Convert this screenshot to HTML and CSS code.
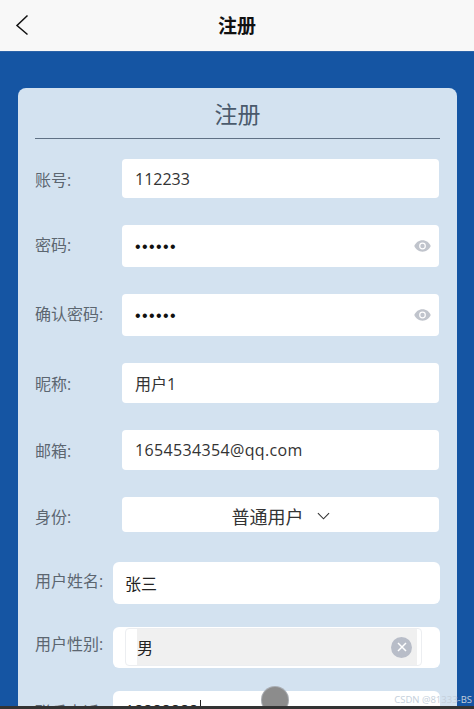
FILE: index.html
```html
<!DOCTYPE html>
<html lang="zh-CN">
<head>
  <meta charset="UTF-8" />
  <meta name="viewport" content="width=device-width, initial-scale=1.0"/>
  <title>注册</title>
  <link rel="stylesheet" href="styles.css">
</head>
<body>
  <header class="nav-bar">
    <svg class="back-icon" viewBox="0 0 14 22" width="14" height="22">
      <path d="M12.5 1.5 2 11.5 12.5 20.5" fill="none" stroke="#111" stroke-width="1.5"/>
    </svg>
    <span class="nav-title">注册</span>
  </header>

  <main class="page">
    <div class="card">
      <h1 class="card-title">注册</h1>

      <div class="row row-account">
        <span class="row-label">账号:</span>
        <div class="field">112233</div>
      </div>

      <div class="row row-password">
        <span class="row-label">密码:</span>
        <div class="field field-tall">
          <span class="dots">••••••</span>
          <svg class="eye-icon" viewBox="0 0 18 12" width="17" height="12">
            <path d="M9 0C5 0 1.800 2.500 0.300 6 1.800 9.500 5 12 9 12s7.200-2.500 8.700-6C16.200 2.500 13 0 9 0Z" fill="#c0c4cc"/>
            <circle cx="9" cy="6" r="3.600" fill="#fff"/>
            <circle cx="9" cy="6" r="2.300" fill="#c0c4cc"/>
          </svg>
        </div>
      </div>

      <div class="row row-confirm">
        <span class="row-label">确认密码:</span>
        <div class="field field-tall">
          <span class="dots">••••••</span>
          <svg class="eye-icon" viewBox="0 0 18 12" width="17" height="12">
            <path d="M9 0C5 0 1.800 2.500 0.300 6 1.800 9.500 5 12 9 12s7.200-2.500 8.700-6C16.200 2.500 13 0 9 0Z" fill="#c0c4cc"/>
            <circle cx="9" cy="6" r="3.600" fill="#fff"/>
            <circle cx="9" cy="6" r="2.300" fill="#c0c4cc"/>
          </svg>
        </div>
      </div>

      <div class="row row-nick">
        <span class="row-label">昵称:</span>
        <div class="field field-mid">用户1</div>
      </div>

      <div class="row row-mail">
        <span class="row-label">邮箱:</span>
        <div class="field field-mid field-mail">1654534354@qq.com</div>
      </div>

      <div class="row row-role">
        <span class="row-label">身份:</span>
        <div class="field field-select">
          <span>普通用户</span>
          <svg class="chevron" viewBox="0 0 14 8" width="13" height="8">
            <path d="M1 1 7 7 13 1" fill="none" stroke="#333" stroke-width="1.200"/>
          </svg>
        </div>
      </div>

      <div class="row row-name">
        <span class="row-label">用户姓名:</span>
        <div class="field field-wide">张三</div>
      </div>

      <div class="row row-gender">
        <span class="row-label">用户性别:</span>
        <div class="gender-box">
          <div class="gender-inner">
            <div class="gender-value">
              <span>男</span>
              <span class="clear-btn">
                <svg viewBox="0 0 10 10" width="10" height="10">
                  <path d="M1 1 9 9M9 1 1 9" stroke="#fff" stroke-width="1.500"/>
                </svg>
              </span>
            </div>
          </div>
        </div>
      </div>

      <div class="row row-phone">
        <span class="row-label">联系电话:</span>
        <div class="field field-wide"><span class="caret-text">18888888</span></div>
      </div>
    </div>
  </main>

  <div class="home-dot"></div>
  <div class="bottom-strip"></div>
  <div class="watermark">CSDN @81333-BS</div>
</body>
</html>
```

FILE: styles.css
```css
html, body {
  margin: 0;
  height: 709px;
  overflow: hidden;
}

body {
  position: relative;
  font-family: "Open Sans", "Noto Sans CJK SC", sans-serif;
  background-color: #1555a3;
  color: #333;
}

.nav-bar {
  height: 52px;
  background-color: #f8f8f8;
  border-bottom: 1px solid #2c63a8;
  box-sizing: border-box;
  display: flex;
  align-items: center;
  justify-content: center;
  position: relative;
}

.back-icon {
  position: absolute;
  left: 15px;
  top: 14px;
}

.nav-title {
  font-size: 19px;
  font-weight: 700;
  color: #111;
  margin-top: -1px;
}

.page {
  padding: 36px 17px 0 18px;
}

.card {
  background-color: #d3e2f0;
  border-radius: 8px;
  padding: 13px 17px 0;
  height: 640px;
}

.card-title {
  margin: 0;
  height: 37px;
  border-bottom: 1px solid #5f7185;
  font-size: 23px;
  font-weight: 400;
  line-height: 27px;
  text-align: center;
  color: #4a5a6c;
}

.row {
  display: flex;
  align-items: center;
}

.row-label {
  width: 87px;
  flex-shrink: 0;
  font-size: 16px;
  color: #5c6670;
}

.field {
  flex: 1;
  height: 39px;
  margin-right: 1px;
  background-color: #fff;
  border-radius: 4px;
  padding: 0 13px;
  box-sizing: border-box;
  display: flex;
  align-items: center;
  font-size: 16px;
  color: #333;
}

.field-tall {
  height: 42px;
  justify-content: space-between;
  padding-right: 8px;
}

.field-mid {
  height: 40px;
}

.field-mail {
  letter-spacing: 0.350px;
}

.dots {
  font-family: "Liberation Sans", sans-serif;
  font-size: 16px;
  letter-spacing: 1.400px;
  color: #111;
  padding-top: 2px;
}

.eye-icon {
  flex-shrink: 0;
}

.row-account { margin-top: 20px; }
.row-password { margin-top: 27px; }
.row-confirm { margin-top: 27px; }
.row-nick { margin-top: 27px; }
.row-mail { margin-top: 27px; }
.row-role { margin-top: 27px; }
.row-name { margin-top: 30px; }
.row-gender { margin-top: 23px; }
.row-phone { margin-top: 23px; }

.row-password .row-label,
.row-confirm .row-label {
  margin-top: -4px;
}

.row-role .row-label {
  margin-top: 3px;
}

.field-select {
  height: 35px;
  justify-content: center;
  gap: 13px;
  padding-top: 3px;
  font-size: 18px;
}

.row-name .row-label,
.row-gender .row-label,
.row-phone .row-label {
  width: 78px;
}

.row-name .row-label {
  margin-top: -6px;
}

.field-wide {
  height: 42px;
  margin-right: 0;
  border-radius: 6px;
  padding-left: 12px;
  color: #222;
}

.row-gender .row-label {
  margin-top: -10px;
}

.gender-box {
  flex: 1;
  height: 41px;
  padding: 1px 18px 2px 12px;
  box-sizing: border-box;
  background-color: #fff;
  border-radius: 6px;
  display: flex;
}

.gender-inner {
  flex: 1;
  border: 1px solid #eceef1;
  border-radius: 4px;
  padding: 0 4px 0 11px;
  display: flex;
}

.gender-value {
  flex: 1;
  background-color: #f0f0f0;
  display: flex;
  align-items: center;
  justify-content: space-between;
  padding-right: 5px;
  font-size: 16px;
  color: #222;
}

.clear-btn {
  width: 21px;
  height: 21px;
  border-radius: 50%;
  background-color: #b8bdc8;
  display: flex;
  align-items: center;
  justify-content: center;
}

.row-phone {
  align-items: flex-start;
}

.row-phone .row-label {
  margin-top: 8px;
}

.row-phone .field-wide {
  align-items: flex-start;
  padding-top: 9px;
}

.caret-text {
  padding-right: 2px;
  border-right: 1px solid #222;
}

.home-dot {
  position: absolute;
  left: 262px;
  top: 687px;
  width: 26px;
  height: 26px;
  border-radius: 50%;
  background-color: #8c8c8c;
  box-shadow: 0 0 0 1px #a9adb2;
}

.bottom-strip {
  position: absolute;
  left: 0;
  right: 0;
  bottom: 0;
  height: 3px;
  background-color: #333;
}

.watermark {
  position: absolute;
  right: 2px;
  bottom: 3px;
  font-size: 9.500px;
  color: #c4cfdb;
}
```
